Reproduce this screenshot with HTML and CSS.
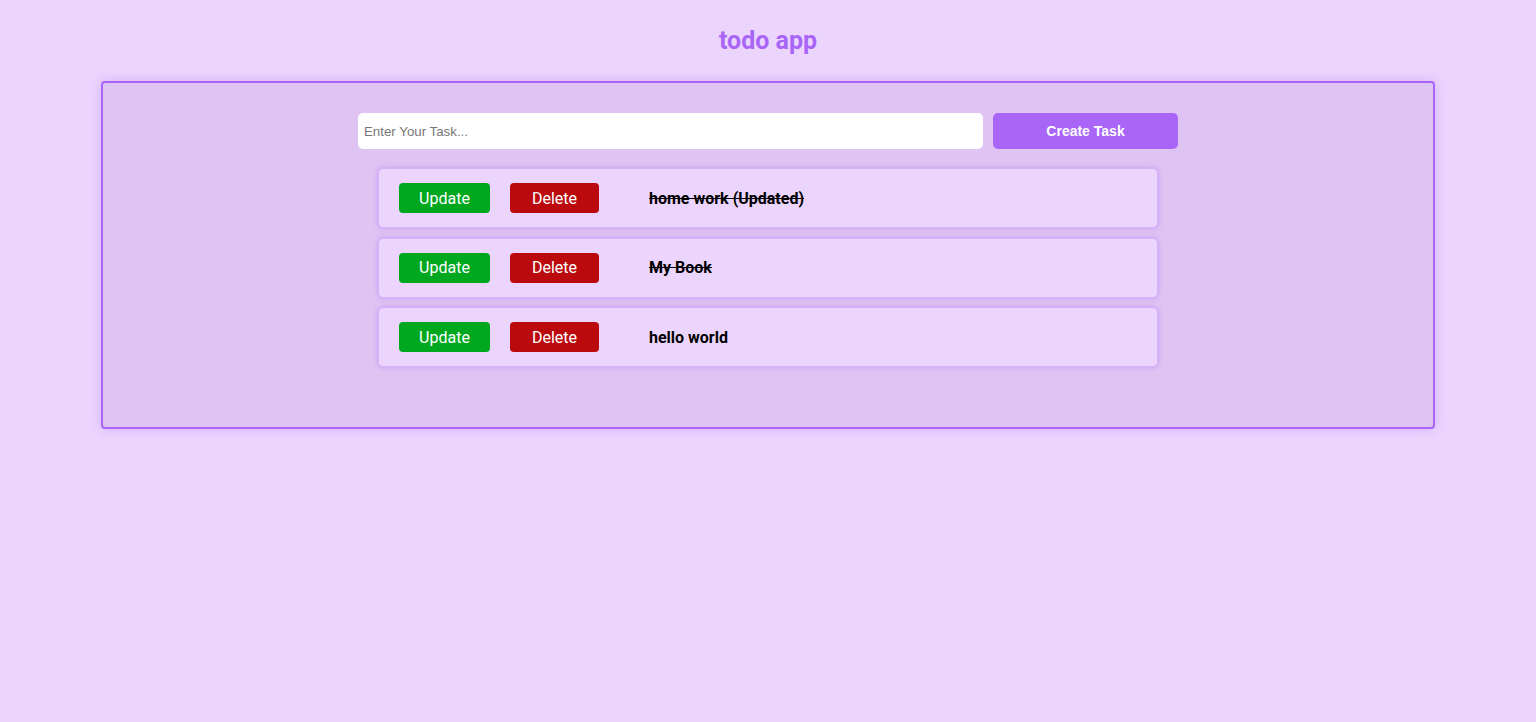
FILE: index.html
```html
<!DOCTYPE html>
<html>
<head>
<meta charset="utf-8">
<link rel="stylesheet" href="styles.css">
</head>
<body>
<h1 class="title">todo app</h1>
<div class="panel">
  <div class="form">
    <input class="task-input" type="text" placeholder="Enter Your Task...">
    <button class="create-btn">Create Task</button>
  </div>
  <div class="list">
    <div class="card">
      <button class="btn update">Update</button>
      <button class="btn delete">Delete</button>
      <span class="task done">home work (Updated)</span>
    </div>
    <div class="card">
      <button class="btn update">Update</button>
      <button class="btn delete">Delete</button>
      <span class="task done">My Book</span>
    </div>
    <div class="card">
      <button class="btn update">Update</button>
      <button class="btn delete">Delete</button>
      <span class="task">hello world</span>
    </div>
  </div>
</div>
</body>
</html>
```
FILE: styles.css
```css
* { box-sizing: border-box; }
html, body { margin: 0; padding: 0; }
body {
  background: #ecd5fd;
  font-family: Roboto, "Liberation Sans", sans-serif;
  min-height: 722px;
  padding-top: 26px;
}
.title {
  margin: 0;
  text-align: center;
  font-size: 25px;
  line-height: 30px;
  font-weight: 700;
  color: #a865f6;
}
.panel {
  margin: 25px 101px 0;
  height: 348px;
  background: #dec3f3;
  border: 2px solid #a865f8;
  border-radius: 4px;
  box-shadow: 0 0 12px rgba(168, 101, 248, 0.35);
  padding-top: 30px;
  display: flex;
  flex-direction: column;
  align-items: center;
}
.form {
  display: flex;
  gap: 10px;
}
.task-input {
  width: 625px;
  height: 36px;
  border: none;
  border-radius: 5px;
  background: #fff;
  padding: 0 6px;
  font-family: "Liberation Sans", Arial, sans-serif;
  font-size: 13.3px;
  outline: none;
}
.task-input::placeholder { color: #777; }
.create-btn {
  width: 185px;
  height: 36px;
  border: none;
  border-radius: 5px;
  background: #a865f8;
  color: #fff;
  font-family: "Liberation Sans", Arial, sans-serif;
  font-weight: 700;
  font-size: 14px;
}
.list {
  margin-top: 19px;
  display: flex;
  flex-direction: column;
  gap: 9.5px;
}
.card {
  width: 780px;
  height: 60px;
  background: #ecd5fd;
  border: 1px solid #d6b2fa;
  border-radius: 5px;
  box-shadow: 0 0 5px rgba(168, 101, 248, 0.45);
  display: flex;
  align-items: center;
  padding-left: 20px;
}
.btn {
  height: 30px;
  border: none;
  border-radius: 4px;
  padding: 0 20px;
  color: #fff;
  font-family: Roboto, "Liberation Sans", sans-serif;
  font-size: 16px;
  margin-right: 20px;
}
.update { background: #00a81f; min-width: 91px; }
.delete { background: #bb0a0e; min-width: 89px; }
.task {
  margin-left: 30px;
  font-weight: 700;
  font-size: 16px;
  color: #000;
}
.done { text-decoration: line-through; }
```
